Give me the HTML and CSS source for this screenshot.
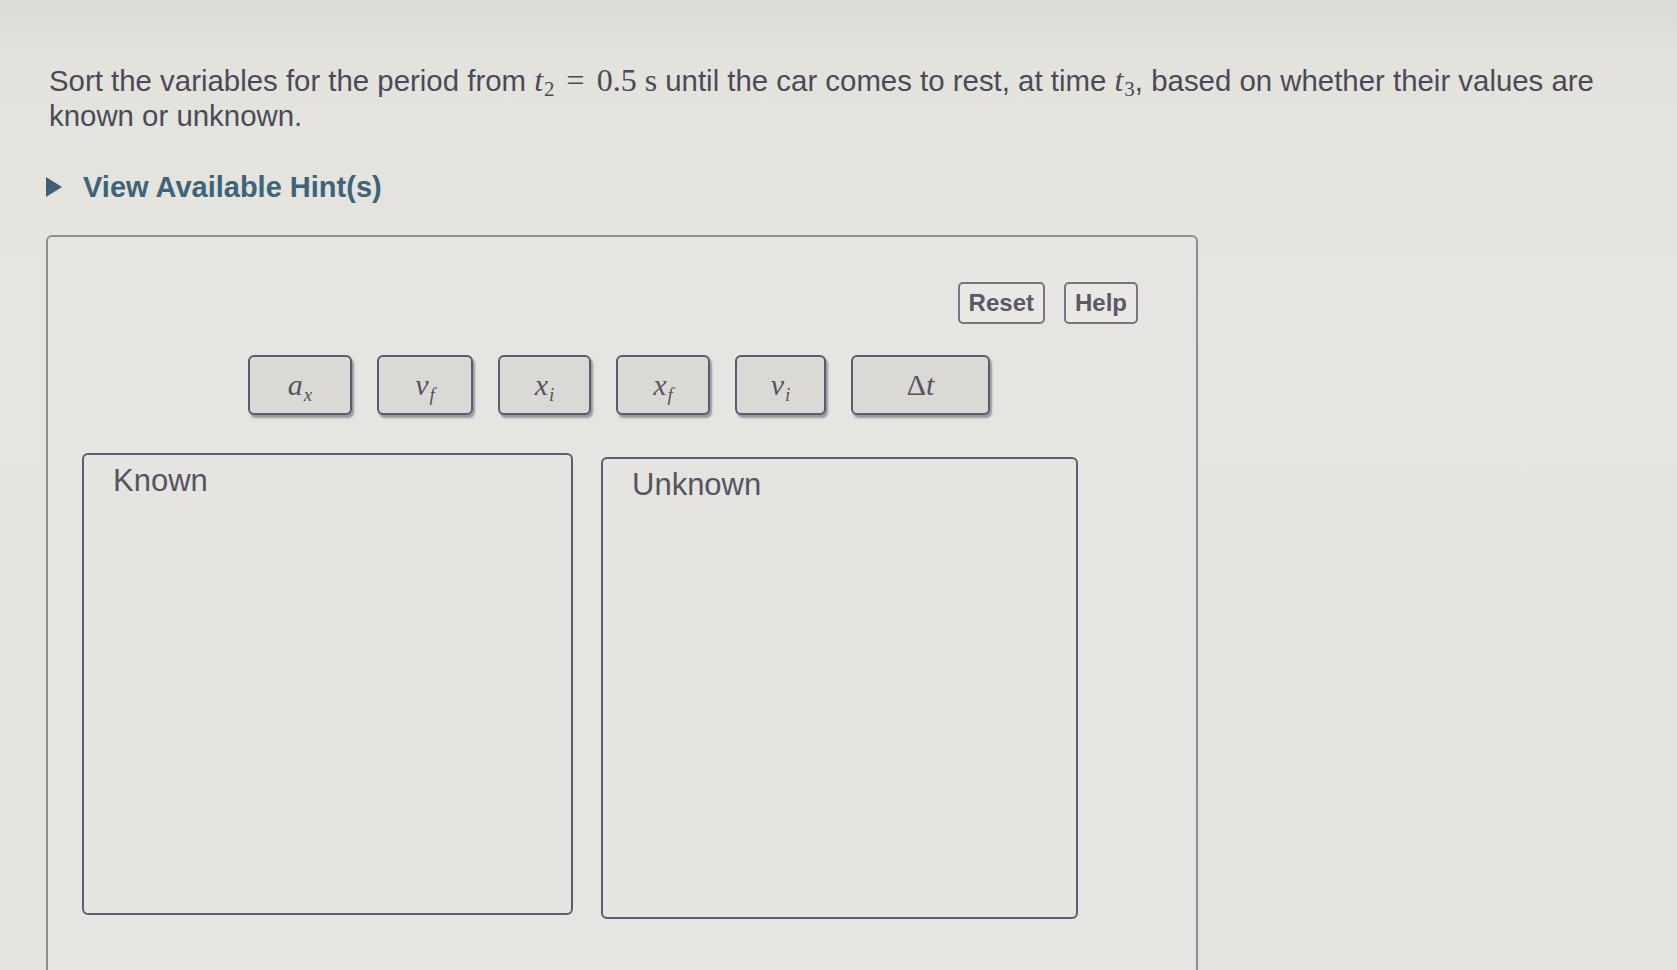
FILE: index.html
```html
<!DOCTYPE html>
<html>
<head>
<meta charset="utf-8">
<link rel="stylesheet" href="styles.css">
</head>
<body>
<div class="page">
  <p class="prompt"><span>Sort the variables for the period from</span> <span class="m"><i>t</i><sub>2</sub> <span class="eq">=</span> 0.5 s</span> <span>until the car comes to rest, at time</span> <span class="m"><i>t</i><sub>3</sub></span><span>, based on whether their values are</span><br><span>known or unknown.</span></p>
  <div class="hint">
    <svg class="tri" width="18" height="22" viewBox="0 0 18 22"><path d="M1 1 L17 11 L1 21 Z" fill="#3f5f73"/></svg>
    <span>View Available Hint(s)</span>
  </div>
  <div class="panel">
    <div class="tools">
      <button class="btn">Reset</button>
      <button class="btn">Help</button>
    </div>
    <div class="tiles">
      <div class="tile w104"><span class="var"><i>a</i><sub><i>x</i></sub></span></div>
      <div class="tile w96"><span class="var"><i>v</i><sub><i>f</i></sub></span></div>
      <div class="tile w93"><span class="var"><i>x</i><sub><i>i</i></sub></span></div>
      <div class="tile w94"><span class="var"><i>x</i><sub><i>f</i></sub></span></div>
      <div class="tile w91"><span class="var"><i>v</i><sub><i>i</i></sub></span></div>
      <div class="tile w139"><span class="var">Δ<i>t</i></span></div>
    </div>
    <div class="bins">
      <div class="bin known"><div class="label">Known</div></div>
      <div class="bin unknown"><div class="label">Unknown</div></div>
    </div>
  </div>
</div>
</body>
</html>
```
FILE: styles.css
```css
html, body {
  margin: 0;
  padding: 0;
  height: 100%;
}
body {
  background: linear-gradient(180deg, #dcdbd6 0px, #e3e2dd 60px, #e6e5e0 300px, #e4e3de 970px);
  font-family: "Liberation Sans", Arial, sans-serif;
  color: #4e4d5a;
  overflow: hidden;
}
.page {
  padding: 63px 0 0 49px;
}
.prompt {
  margin: 0;
  width: 1590px;
  font-size: 29.4px;
  line-height: 35px;
  color: #4b4a58;
}
.m {
  font-family: "Liberation Serif", "Times New Roman", serif;
  font-size: 32px;
  color: #4b4a58;
}
.m sub {
  font-size: 21px;
  font-style: normal;
  vertical-align: -5px;
  line-height: 0;
  margin-left: 1px;
}
.eq {
  margin: 0 4px;
}
.hint {
  display: flex;
  align-items: center;
  gap: 20px;
  margin: 34px 0 0 -4px;
  color: #3d6479;
  font-weight: bold;
  font-size: 29px;
  height: 40px;
}
.tri {
  display: block;
}
.panel {
  margin: 28px 0 0 -3px;
  width: 1152px;
  height: 760px;
  border: 2px solid #8e8d95;
  border-radius: 6px;
  box-sizing: border-box;
  background: #e6e5e1;
}
.tools {
  display: flex;
  justify-content: flex-end;
  gap: 19px;
  padding: 45px 58px 0 0;
}
.btn {
  font-family: "Liberation Sans", Arial, sans-serif;
  font-weight: bold;
  font-size: 24px;
  color: #5a5966;
  background: #e9e8e4;
  border: 2px solid #77767f;
  border-radius: 5px;
  height: 42px;
  padding: 0 9px;
}
.tiles {
  display: flex;
  gap: 25px;
  padding: 31px 0 0 200px;
}
.tile {
  height: 60px;
  box-sizing: border-box;
  border: 2px solid #5c5a6e;
  border-radius: 6px;
  background: #dad9d6;
  box-shadow: 2px 3px 2px rgba(60, 58, 80, 0.45);
  display: flex;
  align-items: center;
  justify-content: center;
}
.w104 { width: 104px; }
.w96 { width: 96px; }
.w93 { width: 93px; }
.w94 { width: 94px; }
.w91 { width: 91px; }
.w139 { width: 139px; }
.var {
  font-family: "Liberation Serif", "Times New Roman", serif;
  font-size: 30px;
  color: #55545f;
}
.var sub {
  font-size: 19px;
  vertical-align: -6px;
  line-height: 0;
  margin-left: 1px;
}
.bins {
  display: flex;
  gap: 28px;
  padding: 38px 0 0 34px;
}
.bin {
  height: 462px;
  box-sizing: border-box;
  border: 2px solid #5e5c70;
  border-radius: 6px;
  background: #e5e4e1;
}
.known { width: 491px; }
.unknown { width: 477px; margin-top: 4px; }
.label {
  font-size: 31px;
  color: #55545f;
  padding: 8px 0 0 29px;
}
```
